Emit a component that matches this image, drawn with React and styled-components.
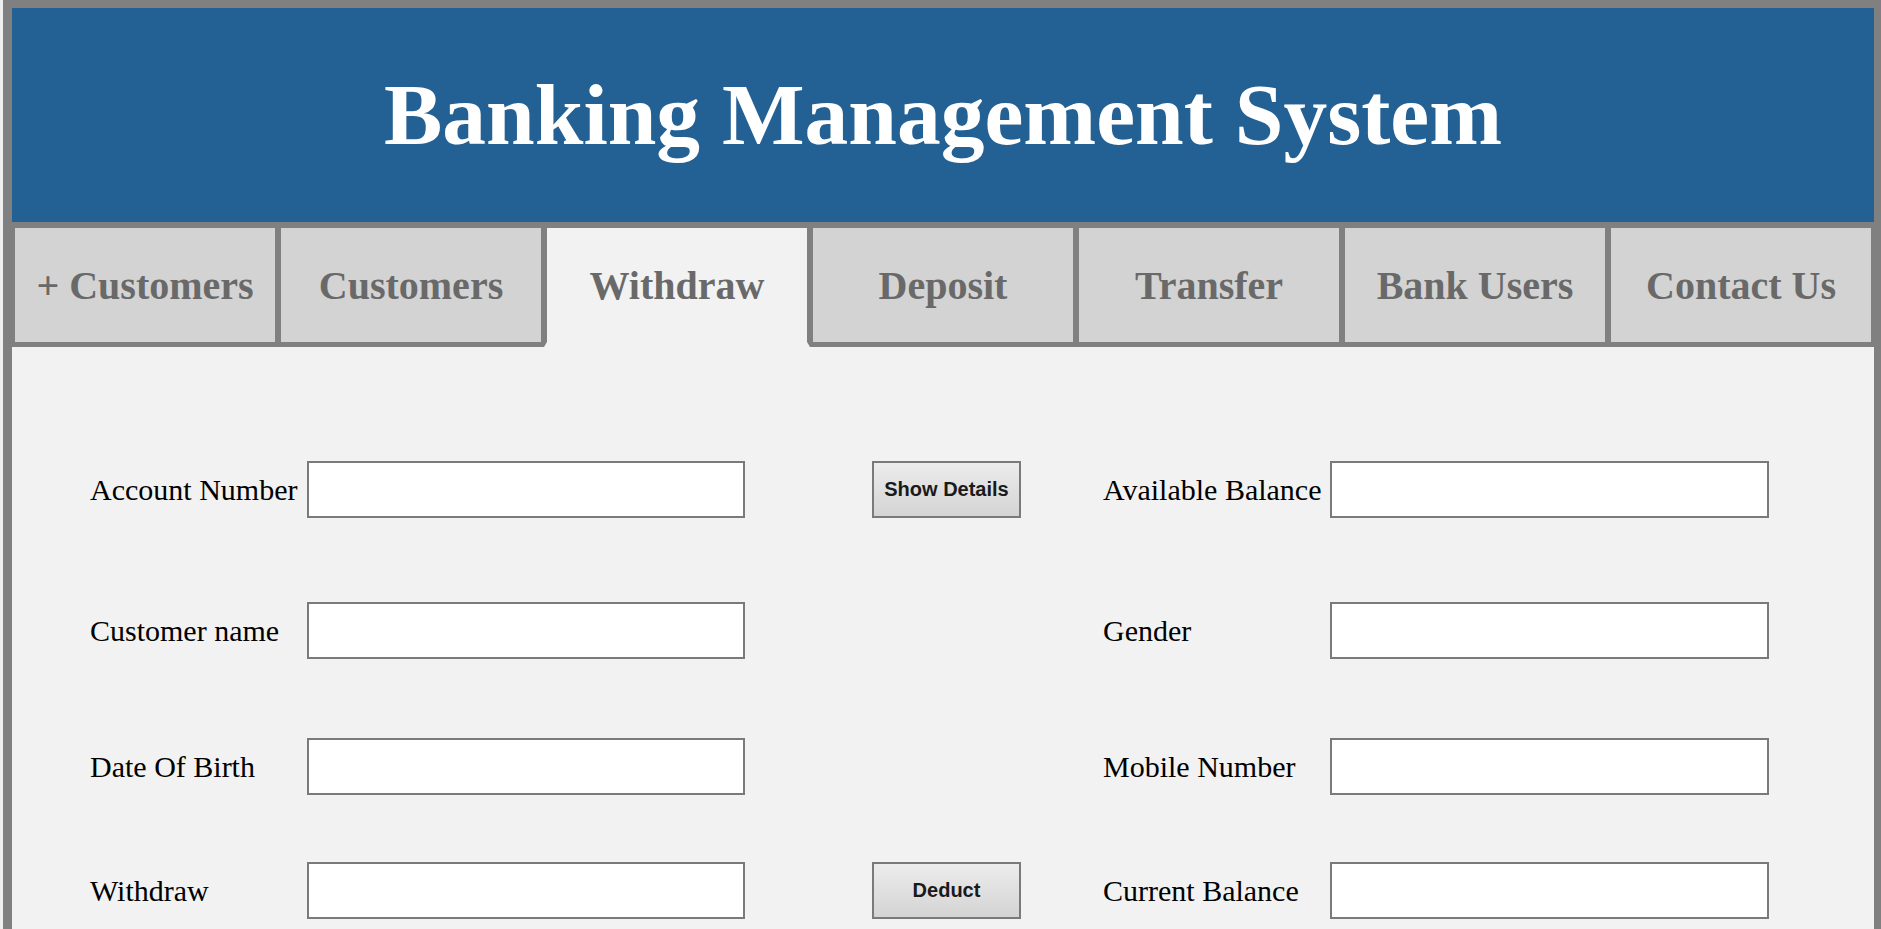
import React from "react";
import styled, { createGlobalStyle } from "styled-components";

const Global = createGlobalStyle`
  html { background: #808080; overflow: hidden; }
  body {
    margin: 0;
    padding: 8px 7px 0 9px;
    border-left: 3px solid #efefef;
    background: #808080;
    height: 929px;
    box-sizing: border-box;
    overflow: hidden;
    font-family: "Liberation Serif", "Times New Roman", serif;
  }
  #root { height: 100%; }
`;

const Page = styled.div`
  display: flex;
  flex-direction: column;
  height: 100%;
`;

const Header = styled.header`
  height: 214px;
  background: #236094;
  display: flex;
  align-items: center;
  justify-content: center;
  flex-shrink: 0;
`;

const Title = styled.h1`
  margin: 0;
  color: #ffffff;
  font-family: "Liberation Serif", "Times New Roman", serif;
  font-weight: bold;
  font-size: 87.5px;
  line-height: 1;
`;

const TabBar = styled.nav`
  display: flex;
  flex-shrink: 0;
`;

const Tab = styled.div`
  flex: 1 1 0;
  min-width: 0;
  height: 114px;
  border: 3px solid #808080;
  border-top-width: 6px;
  border-bottom-width: 5px;
  border-bottom-color: ${(p) => (p.$active ? "#f2f2f2" : "#808080")};
  background: ${(p) => (p.$active ? "#f2f2f2" : "#d3d3d3")};
  display: flex;
  align-items: center;
  justify-content: center;
  color: #696969;
  font-family: "Liberation Serif", "Times New Roman", serif;
  font-weight: bold;
  font-size: 40px;
  white-space: nowrap;
  cursor: pointer;
`;

const Content = styled.main`
  flex: 1;
  background: #f2f2f2;
  padding-left: 78px;
`;

const FormRow = styled.div`
  display: grid;
  grid-template-columns: 217px 565px 231px 227px 439px;
  align-items: center;
  height: 57px;
  margin-top: ${(p) => p.$mt}px;
`;

const Label = styled.label`
  font-family: "Liberation Serif", "Times New Roman", serif;
  font-size: 30px;
  color: #000;
  white-space: nowrap;
`;

const Input = styled.input`
  box-sizing: border-box;
  width: ${(p) => p.$w}px;
  height: 57px;
  border: 2px solid #7a7a7a;
  background: #fff;
  margin: 0;
  padding: 0 6px;
  font-size: 24px;
  outline: none;
`;

const Button = styled.button`
  box-sizing: border-box;
  width: 149px;
  height: 57px;
  margin: 0;
  border: 2px solid #7a7a7a;
  background: linear-gradient(#ececec, #d4d4d4);
  font-family: "Liberation Sans", Arial, sans-serif;
  font-weight: bold;
  font-size: 20px;
  color: #1a1a1a;
  cursor: pointer;
`;

const Empty = styled.span``;

const tabs = [
  "+ Customers",
  "Customers",
  "Withdraw",
  "Deposit",
  "Transfer",
  "Bank Users",
  "Contact Us",
];

const rows = [
  { l: "Account Number", b: "Show Details", r: "Available Balance", mt: 114 },
  { l: "Customer name", b: null, r: "Gender", mt: 84 },
  { l: "Date Of Birth", b: null, r: "Mobile Number", mt: 79 },
  { l: "Withdraw", b: "Deduct", r: "Current Balance", mt: 67 },
];

export default function App() {
  return (
    <>
      <Global />
      <Page>
        <Header>
          <Title>Banking Management System</Title>
        </Header>
        <TabBar>
          {tabs.map((t) => (
            <Tab key={t} $active={t === "Withdraw"}>
              {t}
            </Tab>
          ))}
        </TabBar>
        <Content>
          {rows.map((r) => (
            <FormRow key={r.l} $mt={r.mt}>
              <Label>{r.l}</Label>
              <Input $w={438} />
              {r.b ? <Button>{r.b}</Button> : <Empty />}
              <Label>{r.r}</Label>
              <Input $w={439} />
            </FormRow>
          ))}
        </Content>
      </Page>
    </>
  );
}
